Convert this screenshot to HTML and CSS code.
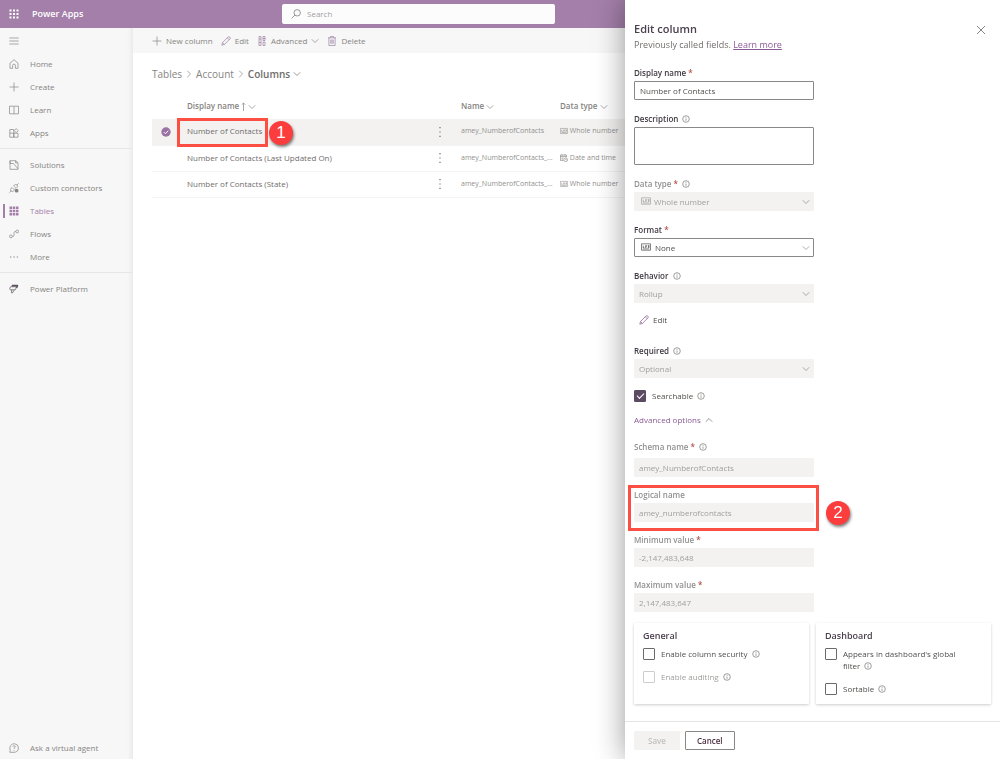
FILE: index.html
```html
<!DOCTYPE html>
<html lang="en">
<head>
  <meta charset="UTF-8" />
  <meta name="viewport" content="width=device-width, initial-scale=1" />
  <title>Power Apps</title>
  <link rel="stylesheet" href="styles.css">
</head>
<body>

  <!-- Shared icons -->
  <svg class="icon-defs" aria-hidden="true">
    <symbol id="i-chevron" viewBox="0 0 8 8"><path d="M.8 2.3 4 5.5l3.2-3.2" /></symbol>
    <symbol id="i-plus" viewBox="0 0 10 10"><path d="M5 .5v9M.5 5h9" /></symbol>
    <symbol id="i-sort" viewBox="0 0 5 10"><path d="M2.500 9V1M.8 2.700 2.500 1 4.200 2.700" /></symbol>
    <symbol id="i-pencil" viewBox="0 0 10 10"><path d="M.8 9.2 1.5 6.6 7.2.9Q8 .2 8.8 1.100 9.700 2 9 2.800L3.400 8.500ZM6.300 1.800 8.200 3.700M1.500 6.600 3.400 8.500" /></symbol>
    <symbol id="i-info" viewBox="0 0 8 8"><circle cx="4" cy="4" r="3.3" /><path d="M4 3.600v2.200M4 2v.8" /></symbol>
    <symbol id="i-number" viewBox="0 0 10 8"><path d="M.5.8h9v6.400h-9zM2.200 2.500v2M1.800 4.500h1.400M4.300 2.500h1.200v1H4.300v1h1.200M6.800 2.500h1.300v2H6.800M7 3.500h1M1.800 5.900h6.400" /></symbol>
    <symbol id="i-date" viewBox="0 0 8 8"><path d="M3.500 6.500h-3v-5.500h6v2M.5 2.500h6M2 .2v1.500M5 .2v1.500M1.500 4h2M1.500 5.200h1.500" /><circle cx="5.700" cy="5.700" r="1.900" /><path d="M5.700 4.700v1h.9" /></symbol>
    <symbol id="i-dots" viewBox="0 0 4 12"><path class="solid" d="M1.400 1h1.200v1.200H1.400zM1.400 5.400h1.200v1.200H1.400zM1.400 9.800h1.200v1.200H1.400z" /></symbol>
  </svg>

  <header class="top-bar">
    <div class="brand">
      <svg class="icon waffle" viewBox="0 0 10 10"><path class="solid" d="M.5.5h2v2h-2zM4 .5h2v2H4zM7.500.5h2v2h-2zM.5 4h2v2h-2zM4 4h2v2H4zM7.500 4h2v2h-2zM.5 7.500h2v2h-2zM4 7.500h2v2H4zM7.500 7.500h2v2h-2z" /></svg>
      <span>Power Apps</span>
    </div>
    <div class="search">
      <svg class="icon" viewBox="0 0 10 10"><circle cx="6.200" cy="3.800" r="3.200" /><path d="M3.900 6.100.6 9.400" /></svg>
      <input type="search" placeholder="Search" aria-label="Search">
    </div>
  </header>

  <div class="layout">

    <nav class="sidebar">
      <button class="menu-btn" aria-label="Menu">
        <svg class="icon" viewBox="0 0 10 10"><path d="M.3 2h9.400M.3 5h9.400M.3 8h9.400" /></svg>
      </button>
      <ul>
        <li><a href="#"><svg class="icon" viewBox="0 0 10 10"><path d="M1 4.200 5 .7l4 3.500v5.100H6.400V6.500Q6.400 5.100 5 5.100T3.600 6.500v2.800H1Z" /></svg>Home</a></li>
        <li><a href="#"><svg class="icon"><use href="#i-plus" /></svg>Create</a></li>
        <li><a href="#"><svg class="icon" viewBox="0 0 10 10"><path d="M.5 1.200h4Q5 1.200 5 1.800q0-.6.5-.6h4v7.600h-9ZM5 1.800v7" /></svg>Learn</a></li>
        <li><a href="#"><svg class="icon" viewBox="0 0 10 10"><path d="M.8 1.500h4v7.700h-4zM.8 5.200h8.200v4H4.800M4.800 5.200V9.200M7.200.6 9.200 2.600 7.200 4.600 5.200 2.600Z" /></svg>Apps</a></li>
      </ul>
      <ul>
        <li><a href="#"><svg class="icon" viewBox="0 0 10 10"><path d="M1 .7h5.800l2.200 2v6.600H1ZM1 3.500h3.400l4.600 5.200M1 3.500V.7M6.600.7v2.200H9" /></svg>Solutions</a></li>
        <li><a href="#"><svg class="icon" viewBox="0 0 10 10"><path d="M.4 9.600 2 8M9.600.4 8 2M2 8Q.8 6.500 2.200 5.200L3 4.500 5.500 7l-.8.8Q3.300 9.200 2 8M8 2Q6.600.8 5.300 2.200L4.600 3 7 5.400l.8-.8Q9.200 3.300 8 2" /><circle class="solid" cx="7.600" cy="7.700" r="1.900" /></svg>Custom connectors</a></li>
        <li class="active"><a href="#"><svg class="icon" viewBox="0 0 10 10"><path class="solid" d="M.5.5h2.500V3H.5zM3.700.5h2.600V3H3.700zM7 .5h2.500V3H7zM.5 3.700H3v2.600H.5zM3.700 3.700h2.600v2.600H3.700zM7 3.700h2.500v2.600H7zM.5 7H3v2.500H.5zM3.700 7h2.600v2.500H3.700zM7 7h2.500v2.500H7z" /></svg>Tables</a></li>
        <li><a href="#"><svg class="icon" viewBox="0 0 10 10"><circle cx="1.900" cy="7.400" r="1.400" /><circle cx="8.200" cy="2.500" r="1.400" /><path d="M3.300 7.400h1Q5.200 7.200 5 5.500 4.800 2.700 5.800 2.500h1" /></svg>Flows</a></li>
        <li><a href="#"><svg class="icon" viewBox="0 0 10 10"><path class="solid" d="M1 4.400h1.300v1.200H1zM4.400 4.400h1.300v1.200H4.400zM7.800 4.400h1.300v1.200H7.800z" /></svg>More</a></li>
      </ul>
      <ul>
        <li><a href="#"><svg class="icon platform" viewBox="0 0 10 10"><path class="solid" d="M3 .7h5.600q.8 0 .6.800l-.4 1.700q-.2.700-1 .7H7.200V2.600H2.500Z" /><path d="M2 2.700h4.500q.8 0 .6.800l-.3 1.500q-.2.800-1 .8H1.600Q.6 5.800.8 4.600 1 2.700 2 2.700M2.800 5.800 2.400 8.300q0 1.100 1 .7L5.400 5.800" /></svg>Power Platform</a></li>
      </ul>
      <a class="agent" href="#"><svg class="icon" viewBox="0 0 10 10"><path d="M.8 9.300 1.200 7Q.2 4.800 1.500 2.700 3 .7 5.300.7q4 .3 4.200 4.300Q9.200 9.200 5 9.300ZM3.900 3.800Q4 2.700 5.100 2.700q1.200.1 1.200 1.100Q6.200 4.500 5.100 5.300V6M5.100 6.900v.8" /></svg>Ask a virtual agent</a>
    </nav>

    <main class="content">
      <div class="command-bar">
        <button><svg class="icon"><use href="#i-plus" /></svg>New column</button>
        <button><svg class="icon tint"><use href="#i-pencil" /></svg>Edit</button>
        <button><svg class="icon tint" viewBox="0 0 10 10"><path d="M2 .5h2v9H2zM2 3h2M2 6.500h2M6 .5h2v4H6zM6 6h2v3.500H6zM6 2.500h2" /></svg>Advanced<svg class="icon small"><use href="#i-chevron" /></svg></button>
        <button><svg class="icon tint" viewBox="0 0 10 10"><path d="M1 1.800h8M3.500 1.800V.5h3v1.300M1.900 1.800v7.700h6.200V1.800M3.800 3.500v4.300M5 3.500v4.300M6.200 3.500v4.300" /></svg>Delete</button>
      </div>

      <div class="breadcrumb">
        <a href="#">Tables</a>
        <svg class="icon small next"><use href="#i-chevron" /></svg>
        <a href="#">Account</a>
        <svg class="icon small next"><use href="#i-chevron" /></svg>
        <button>Columns<svg class="icon small"><use href="#i-chevron" /></svg></button>
      </div>

      <table class="columns-table">
        <thead>
          <tr>
            <th class="col-check"></th>
            <th class="col-display">Display name <svg class="icon sort"><use href="#i-sort" /></svg> <svg class="icon small"><use href="#i-chevron" /></svg></th>
            <th class="col-menu"></th>
            <th class="col-name">Name <svg class="icon small"><use href="#i-chevron" /></svg></th>
            <th>Data type <svg class="icon small"><use href="#i-chevron" /></svg></th>
          </tr>
        </thead>
        <tbody>
          <tr class="selected">
            <td class="col-check"><svg class="icon check" viewBox="0 0 10 10"><circle cx="5" cy="5" r="4.700" /><path d="M2.800 5.100 4.400 6.700 7.300 3.700" /></svg></td>
            <td class="marked">Number of Contacts<span class="frame"></span><span class="badge">1</span></td>
            <td class="col-menu"><svg class="icon dots"><use href="#i-dots" /></svg></td>
            <td class="minor">amey_NumberofContacts</td>
            <td class="minor"><svg class="icon small"><use href="#i-number" /></svg> Whole number</td>
          </tr>
          <tr>
            <td class="col-check"></td>
            <td>Number of Contacts (Last Updated On)</td>
            <td class="col-menu"><svg class="icon dots"><use href="#i-dots" /></svg></td>
            <td class="minor">amey_NumberofContacts_...</td>
            <td class="minor"><svg class="icon small"><use href="#i-date" /></svg> Date and time</td>
          </tr>
          <tr>
            <td class="col-check"></td>
            <td>Number of Contacts (State)</td>
            <td class="col-menu"><svg class="icon dots"><use href="#i-dots" /></svg></td>
            <td class="minor">amey_NumberofContacts_...</td>
            <td class="minor"><svg class="icon small"><use href="#i-number" /></svg> Whole number</td>
          </tr>
        </tbody>
      </table>
    </main>
  </div>

  <!-- Edit column panel -->
  <aside class="panel">
    <div class="panel-header">
      <div>
        <h2>Edit column</h2>
        <p>Previously called fields. <a href="#">Learn more</a></p>
      </div>
      <button class="close-btn" aria-label="Close"><svg class="icon" viewBox="0 0 10 10"><path d="M1 1l8 8M9 1 1 9" /></svg></button>
    </div>

    <form class="panel-body" id="column-form">
      <div class="field">
        <label for="display-name">Display name <b>*</b></label>
        <input type="text" id="display-name" value="Number of Contacts">
      </div>
      <div class="field">
        <label for="description">Description <svg class="icon info"><use href="#i-info" /></svg></label>
        <textarea id="description"></textarea>
      </div>
      <div class="field disabled">
        <label for="data-type">Data type <b>*</b> <svg class="icon info"><use href="#i-info" /></svg></label>
        <div class="select with-icon">
          <svg class="icon type"><use href="#i-number" /></svg>
          <select id="data-type" disabled><option>Whole number</option></select>
          <svg class="icon small arrow"><use href="#i-chevron" /></svg>
        </div>
      </div>
      <div class="field">
        <label for="format">Format <b>*</b></label>
        <div class="select with-icon">
          <svg class="icon type"><use href="#i-number" /></svg>
          <select id="format"><option>None</option></select>
          <svg class="icon small arrow"><use href="#i-chevron" /></svg>
        </div>
      </div>
      <div class="field">
        <label for="behavior">Behavior <svg class="icon info"><use href="#i-info" /></svg></label>
        <div class="select">
          <select id="behavior" disabled><option>Rollup</option></select>
          <svg class="icon small arrow"><use href="#i-chevron" /></svg>
        </div>
        <button type="button" class="edit-btn"><svg class="icon"><use href="#i-pencil" /></svg>Edit</button>
      </div>
      <div class="field">
        <label for="required">Required <svg class="icon info"><use href="#i-info" /></svg></label>
        <div class="select">
          <select id="required" disabled><option>Optional</option></select>
          <svg class="icon small arrow"><use href="#i-chevron" /></svg>
        </div>
      </div>
      <div class="check-row">
        <input type="checkbox" id="searchable" checked>
        <label for="searchable">Searchable <svg class="icon info"><use href="#i-info" /></svg></label>
      </div>
      <button type="button" class="advanced-btn">Advanced options<svg class="icon small up"><use href="#i-chevron" /></svg></button>

      <div class="advanced">
        <div class="field disabled tall">
          <label for="schema-name">Schema name <b>*</b> <svg class="icon info"><use href="#i-info" /></svg></label>
          <input type="text" id="schema-name" value="amey_NumberofContacts" disabled>
        </div>
        <div class="field disabled marked">
          <label for="logical-name">Logical name</label>
          <input type="text" id="logical-name" value="amey_numberofcontacts" disabled>
          <span class="frame"></span><span class="badge">2</span>
        </div>
        <div class="field disabled">
          <label for="min-value">Minimum value <b>*</b></label>
          <input type="text" id="min-value" value="-2,147,483,648" disabled>
        </div>
        <div class="field disabled">
          <label for="max-value">Maximum value <b>*</b></label>
          <input type="text" id="max-value" value="2,147,483,647" disabled>
        </div>

        <div class="cards">
          <section class="card">
            <h3>General</h3>
            <div class="check-row">
              <input type="checkbox" id="security">
              <label for="security">Enable column security <svg class="icon info"><use href="#i-info" /></svg></label>
            </div>
            <div class="check-row">
              <input type="checkbox" id="auditing" disabled>
              <label for="auditing">Enable auditing <svg class="icon info"><use href="#i-info" /></svg></label>
            </div>
          </section>
          <section class="card">
            <h3>Dashboard</h3>
            <div class="check-row">
              <input type="checkbox" id="global-filter">
              <label for="global-filter">Appears in dashboard's global filter <svg class="icon info"><use href="#i-info" /></svg></label>
            </div>
            <div class="check-row">
              <input type="checkbox" id="sortable">
              <label for="sortable">Sortable <svg class="icon info"><use href="#i-info" /></svg></label>
            </div>
          </section>
        </div>
      </div>
    </form>

    <div class="panel-footer">
      <button form="column-form" disabled>Save</button>
      <button type="button">Cancel</button>
    </div>
  </aside>

</body>
</html>
```

FILE: styles.css
```css
* {
  box-sizing: border-box;
}

body {
  margin: 0;
  height: 100vh;
  display: flex;
  flex-direction: column;
  overflow: hidden;
  font-family: "Open Sans", "Noto Sans", sans-serif;
  font-size: 8px;
  line-height: 12px;
  color: #868482;
  background-color: #fff;
}

a {
  color: inherit;
  text-decoration: none;
}

button,
input,
select,
textarea {
  font: inherit;
  color: inherit;
}

button {
  padding: 0;
  border: none;
  background: none;
  cursor: pointer;
}

/* Icons */
.icon-defs {
  position: absolute;
  width: 0;
  height: 0;
}

.icon {
  width: 10px;
  height: 10px;
  flex: none;
  fill: none;
  stroke: currentColor;
  stroke-width: 0.7;
  vertical-align: middle;
}

.icon .solid,
.solid {
  fill: currentColor;
  stroke: none;
}

.icon.small {
  width: 8px;
  height: 8px;
}

.icon.info {
  width: 8px;
  height: 8px;
  margin-left: 2px;
  color: #767472;
  vertical-align: -1px;
}

.icon.dots {
  width: 4px;
  height: 12px;
}

.icon.sort {
  width: 5px;
  height: 10px;
}

.icon.tint {
  color: #9a7fa2;
}

/* Top bar */
.top-bar {
  height: 28px;
  flex: none;
  display: flex;
  align-items: center;
  background-color: #a37fa9;
}

.brand {
  width: 282px;
  padding-left: 9px;
  display: flex;
  align-items: center;
  gap: 13px;
  color: #fff;
  font-size: 9px;
  font-weight: 600;
}

.search {
  width: 273px;
  height: 20px;
  padding: 0 9px;
  display: flex;
  align-items: center;
  gap: 6px;
  border-radius: 2px;
  background-color: #fdfcfd;
  color: #6e6a6e;
}

.search input {
  flex: 1;
  padding: 0;
  border: none;
  outline: none;
  background: none;
}

.search input::placeholder {
  color: #a19fa1;
}

/* Left navigation */
.layout {
  flex: 1;
  display: flex;
}

.sidebar {
  width: 133px;
  flex: none;
  display: flex;
  flex-direction: column;
  background-color: #f7f7f7;
  border-right: 1px solid #ececec;
  box-shadow: inset -4px 0 4px -3px #e8e8e8;
}

.menu-btn {
  height: 24px;
  padding-left: 9px;
  text-align: left;
}

.sidebar ul {
  margin: 0;
  padding: 0 0 4px;
  list-style: none;
}

.sidebar ul + ul {
  padding-top: 4px;
  border-top: 1px solid #e6e6e6;
}

.sidebar li a,
.agent {
  height: 23px;
  padding-left: 9px;
  display: flex;
  align-items: center;
  gap: 11px;
}

.sidebar li.active {
  color: #a37fa9;
  background: linear-gradient(#a37fa9, #a37fa9) 3px center / 2px 14px no-repeat;
}

.icon.platform {
  color: #5c535e;
}

.agent {
  margin-top: auto;
}

/* Main area */
.content {
  flex: 1;
}

.command-bar {
  height: 25px;
  padding-left: 19px;
  display: flex;
  align-items: center;
  gap: 8px;
  background-color: #f7f7f7;
}

.command-bar button {
  display: flex;
  align-items: center;
  gap: 4px;
}

.breadcrumb {
  height: 42px;
  padding-left: 19px;
  display: flex;
  align-items: center;
  gap: 3px;
  font-size: 10px;
}

.breadcrumb button {
  display: flex;
  align-items: center;
  gap: 3px;
  font-weight: 600;
  color: #6f6d6b;
}

.icon.next {
  transform: rotate(-90deg);
}

.columns-table {
  width: calc(100% - 38px);
  margin: 0 19px;
  border-collapse: collapse;
  table-layout: fixed;
}

.columns-table th,
.columns-table td {
  height: 26px;
  padding: 0 7px 1px;
  text-align: left;
  white-space: nowrap;
}

.columns-table th {
  height: 24px;
  padding-bottom: 2px;
  font-weight: 600;
}

.columns-table td {
  border-bottom: 1px solid #f4f4f4;
  color: #6f6d6b;
}

.columns-table td.minor {
  font-size: 7px;
  color: #92908e;
}

.columns-table .selected td {
  background-color: #f3f2f1;
}

.columns-table .col-check {
  width: 28px;
  padding: 0 0 1px;
  text-align: center;
}

.columns-table .col-menu {
  width: 24px;
  padding: 0 8px;
}

.col-display {
  width: 250px;
}

.col-name {
  width: 99px;
}

.check circle {
  fill: #9b72a3;
  stroke: none;
}

.check path {
  stroke: #fff;
  stroke-width: 1;
}

/* Numbered callouts */
.marked {
  position: relative;
}

.frame {
  position: absolute;
  top: -1px;
  left: -3px;
  width: 91px;
  height: 29px;
  border: 3px solid #fb4f43;
}

.badge {
  position: absolute;
  top: 2px;
  left: 89px;
  width: 24px;
  height: 24px;
  border-radius: 50%;
  background-color: #fc3d3d;
  box-shadow: 1px 2px 3px rgba(0, 0, 0, 0.5);
  color: #fff;
  font-family: "Liberation Sans", Arial, sans-serif;
  font-size: 17px;
  line-height: 24px;
  text-align: center;
}

.field .frame {
  top: -3px;
  left: -6px;
  width: calc(100% + 11px);
  height: 46px;
}

.field .badge {
  top: 13px;
  left: calc(100% + 12px);
}

/* Edit panel */
.panel {
  position: fixed;
  top: 0;
  right: 0;
  bottom: 0;
  width: 375px;
  display: flex;
  flex-direction: column;
  background-color: #fff;
  color: #52504e;
  box-shadow: 0 0 28px rgba(0, 0, 0, 0.4);
}

.panel-header {
  padding: 21px 14px 0 9px;
  display: flex;
  justify-content: space-between;
  align-items: flex-start;
}

.panel-header h2 {
  margin: 0;
  font-size: 11px;
  line-height: 16px;
  font-weight: 600;
  color: #4b404e;
}

.panel-header p {
  margin: 0;
  font-size: 9px;
  line-height: 16px;
  color: #72706e;
}

.panel-header a {
  color: #8a5a94;
  text-decoration: underline;
}

.close-btn {
  height: 16px;
}

.panel-body {
  flex: 1;
  min-height: 0;
  padding: 13px 9px 0;
  display: flex;
  flex-direction: column;
  gap: 12px;
}

.field {
  width: 180px;
}

.field label {
  display: block;
  height: 15px;
  line-height: 13px;
  font-weight: 600;
  color: #3f3842;
}

.field.tall label {
  height: 20px;
  line-height: 17px;
}

.field.disabled label {
  color: #929090;
}

.field b {
  font-weight: 600;
  color: #b5524a;
}

.field input,
.field textarea,
.field select {
  display: block;
  width: 100%;
  height: 19px;
  padding: 0 5px;
  border: 1px solid #8a8886;
  border-radius: 1px;
  outline: none;
  background-color: #fff;
  appearance: none;
}

.field textarea {
  height: 38px;
  resize: none;
}

.field input:disabled,
.field select:disabled {
  padding: 0 5px;
  border: none;
  background-color: #f3f2f1;
  color: #a19f9d;
  opacity: 1;
}

.field .select {
  position: relative;
}

.field .select.with-icon select {
  padding-left: 20px;
}

.select .arrow {
  position: absolute;
  top: 6px;
  right: 4px;
  color: #8a8886;
}

.select .type {
  position: absolute;
  top: 4px;
  left: 7px;
}

.disabled .type {
  color: #a19f9d;
}

.edit-btn {
  height: 25px;
  margin: 4px 0 0 5px;
  display: flex;
  align-items: center;
  gap: 4px;
}

.edit-btn .icon {
  color: #8a5a94;
}

.check-row {
  display: flex;
  gap: 6px;
}

.check-row input {
  width: 12px;
  height: 12px;
  margin: 0;
  flex: none;
  border: 1px solid #6b696b;
  border-radius: 1px;
  background-color: #fff;
  appearance: none;
}

.check-row input:checked {
  border-color: #5c4a62;
  background-color: #5c4a62;
  position: relative;
}

.check-row input:checked::after {
  content: "";
  position: absolute;
  top: 2px;
  left: 2px;
  width: 6px;
  height: 3px;
  border: solid #fff;
  border-width: 0 0 1px 1px;
  transform: rotate(-45deg);
}

.check-row input:disabled {
  border-color: #cfcdcb;
}

.check-row input:disabled + label {
  color: #a19f9d;
}

.advanced-btn {
  height: 12px;
  display: flex;
  align-items: center;
  gap: 4px;
  color: #8a5a94;
}

.advanced-btn .up {
  color: #6f6d6b;
  transform: rotate(180deg);
}

.advanced {
  display: flex;
  flex-direction: column;
  gap: 11px;
}

.cards {
  display: grid;
  grid-template-columns: 1fr 1fr;
  gap: 7px;
}

.card {
  padding: 6px 9px 9px;
  display: flex;
  flex-direction: column;
  gap: 11px;
  border-radius: 1px;
  box-shadow: 0 1px 3px rgba(0, 0, 0, 0.2);
}

.card h3 {
  margin: 0 0 -5px;
  font-size: 9px;
  line-height: 13px;
  font-weight: 600;
  color: #4b404e;
}

.card label {
  max-width: 120px;
}

.panel-footer {
  height: 38px;
  padding: 0 9px;
  display: flex;
  align-items: center;
  gap: 5px;
  border-top: 1px solid #e6e5e4;
}

.panel-footer button {
  height: 19px;
  padding: 0 11px;
  border: 1px solid #8a8886;
  border-radius: 1px;
  font-weight: 600;
  color: #4b2f42;
}

.panel-footer button:disabled {
  padding: 0 13px;
  border-color: #f3f2f1;
  background-color: #f3f2f1;
  color: #c4c2c0;
}
```
